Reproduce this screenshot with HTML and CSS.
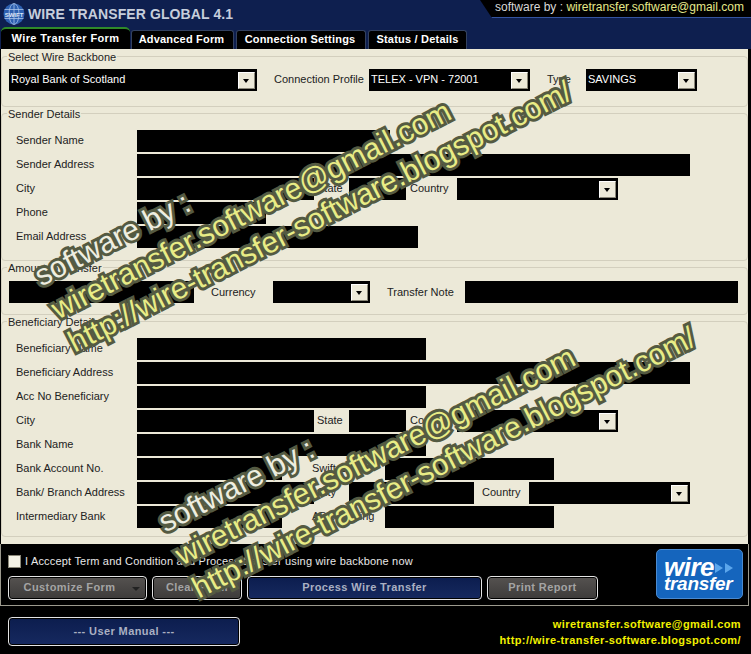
FILE: index.html
```html
<!DOCTYPE html>
<html lang="en">
<head>
    <meta charset="UTF-8">
    <title>Wire Transfer Global 4.1</title>
    <link rel="stylesheet" href="styles.css">
</head>
<body>
<div class="app">
    <header class="topbar">
        <svg class="globe" width="22" height="22" viewBox="0 0 22 22">
            <circle cx="11" cy="11" r="10.5" fill="#2c5fb0"/>
            <g fill="none" stroke="#a9c4ea" stroke-width="0.8">
                <ellipse cx="11" cy="11" rx="5" ry="10.5"/>
                <path d="M1.5 6.5h19M1.5 15.5h19M11 .5v21"/>
            </g>
            <text x="11" y="13.5" text-anchor="middle" class="globe-text">SWIFT</text>
        </svg>
        <h1 class="title">WIRE TRANSFER GLOBAL 4.1</h1>
        <div class="credit">software by : <span class="credit-mail">wiretransfer.software@gmail.com</span></div>
    </header>

    <nav class="tabs">
        <div class="tab tab-active">Wire Transfer Form</div>
        <div class="tab tab-advanced">Advanced Form</div>
        <div class="tab tab-connection">Connection Settings</div>
        <div class="tab tab-status">Status / Details</div>
    </nav>

    <form class="panel">
        <fieldset class="group group-backbone">
            <legend>Select Wire Backbone</legend>
            <div class="row indent">
                <div class="combo w-backbone">Royal Bank of Scotland<span class="arrow"></span></div>
                <label class="lbl ml-17 w-profile">Connection Profile</label>
                <div class="combo w-profile-box">TELEX - VPN - 72001<span class="arrow"></span></div>
                <label class="lbl ml-17 w-type">Type</label>
                <div class="combo w-type-box">SAVINGS<span class="arrow"></span></div>
            </div>
        </fieldset>

        <fieldset class="group group-sender">
            <legend>Sender Details</legend>
            <div class="row"><label class="lbl name">Sender Name</label><input class="field w-253"></div>
            <div class="row"><label class="lbl name">Sender Address</label><input class="field w-553"></div>
            <div class="row">
                <label class="lbl name">City</label><input class="field w-177">
                <label class="lbl w-35">State</label><input class="field w-57">
                <label class="lbl w-51">Country</label><div class="combo w-161"><span class="arrow"></span></div>
            </div>
            <div class="row"><label class="lbl name">Phone</label><input class="field w-129"></div>
            <div class="row"><label class="lbl name">Email Address</label><input class="field w-281"></div>
        </fieldset>

        <fieldset class="group group-amount">
            <legend>Amount to Transfer</legend>
            <div class="row indent">
                <input class="field w-185">
                <label class="lbl ml-17 w-62">Currency</label>
                <div class="combo w-97"><span class="arrow"></span></div>
                <label class="lbl ml-17 w-78">Transfer Note</label>
                <input class="field w-273">
            </div>
        </fieldset>

        <fieldset class="group group-beneficiary">
            <legend>Beneficiary Details</legend>
            <div class="row"><label class="lbl name">Beneficiary Name</label><input class="field w-289"></div>
            <div class="row"><label class="lbl name">Beneficiary Address</label><input class="field w-553"></div>
            <div class="row"><label class="lbl name">Acc No Beneficiary</label><input class="field w-289"></div>
            <div class="row">
                <label class="lbl name">City</label><input class="field w-177">
                <label class="lbl w-35">State</label><input class="field w-57">
                <label class="lbl w-51">Country</label><div class="combo w-161"><span class="arrow"></span></div>
            </div>
            <div class="row"><label class="lbl name">Bank Name</label><input class="field w-289"></div>
            <div class="row">
                <label class="lbl name">Bank Account No.</label><input class="field w-145">
                <label class="lbl w-103">Swift Code</label><input class="field w-169">
            </div>
            <div class="row">
                <label class="lbl name">Bank/ Branch Address</label><input class="field w-177">
                <label class="lbl w-35">City</label><input class="field w-125">
                <label class="lbl ml-8 w-47">Country</label><div class="combo w-161"><span class="arrow"></span></div>
            </div>
            <div class="row">
                <label class="lbl name">Intermediary Bank</label><input class="field w-145">
                <label class="lbl w-103">ABA Routing</label><input class="field w-169">
            </div>
        </fieldset>
    </form>

    <section class="actions">
        <div class="actions-left">
            <label class="accept"><span class="check"></span>I Acccept Term and Condition and Process transfer using wire backbone now</label>
            <div class="buttons">
                <button type="button" class="btn btn-grey btn-customize">Customize Form<span class="btn-caret"></span></button>
                <button type="button" class="btn btn-grey btn-clear">Clear Form</button>
                <button type="button" class="btn btn-navy btn-process">Process Wire Transfer</button>
                <button type="button" class="btn btn-grey btn-print">Print Report</button>
            </div>
        </div>
        <div class="logo">
            <span class="logo-wire">wire</span>
            <svg class="logo-arrows" width="18" height="10" viewBox="0 0 18 10"><path d="M0 0l8 5-8 5zM10 0l8 5-8 5z" fill="#5ba6ec"/></svg>
            <span class="logo-transfer">transfer</span>
        </div>
    </section>

    <footer class="footer">
        <button type="button" class="btn btn-navy btn-manual">--- User Manual ---</button>
        <div class="contact">
            <div>wiretransfer.software@gmail.com</div>
            <div>http://wire-transfer-software.blogspot.com/</div>
        </div>
    </footer>

    <!-- watermark stamped over the form -->
    <div class="stamp stamp-one">
        <div class="stamp-by">software by :</div>
        <div class="stamp-mail">wiretransfer.software@gmail.com</div>
        <div class="stamp-url">http://wire-transfer-software.blogspot.com/</div>
    </div>
    <div class="stamp stamp-two">
        <div class="stamp-by">software by :</div>
        <div class="stamp-mail">wiretransfer.software@gmail.com</div>
        <div class="stamp-url">http://wire-transfer-software.blogspot.com/</div>
    </div>
</div>
</body>
</html>
```

FILE: styles.css
```css
* {
    box-sizing: border-box;
}
body {
    margin: 0;
    background: #000;
    font-family: "Liberation Sans", Arial, sans-serif;
    font-size: 11px;
}
.app {
    position: relative;
    width: 751px;
    height: 654px;
    overflow: hidden;
    background: #000;
}

/* header */
.topbar {
    display: flex;
    height: 27px;
    background: #0e1f4f;
}
.globe {
    margin: 3px 0 0 3px;
}
.globe-text {
    font-size: 6px;
    font-weight: bold;
    fill: #dfe8f6;
}
.title {
    margin: 6px 0 0 3px;
    font-size: 14px;
    line-height: 16px;
    font-weight: bold;
    letter-spacing: 0.1px;
    color: #c6cedc;
    white-space: nowrap;
}
.credit {
    margin-left: auto;
    width: 271px;
    height: 18px;
    padding-left: 15px;
    background: #000;
    border-bottom: 1px solid #34539f;
    clip-path: polygon(0 0, 100% 0, 100% 100%, 12px 100%);
    color: #d8d8d8;
    font-size: 12px;
    line-height: 15px;
    white-space: nowrap;
}
.credit-mail {
    color: #e6e98a;
}

/* tabs */
.tabs {
    display: flex;
    align-items: flex-end;
    height: 22px;
    padding-left: 1px;
    background: #0e1f4f;
}
.tab {
    height: 19px;
    margin-right: 2px;
    background: #000;
    border-radius: 3px 3px 0 0;
    border: 1px solid #33415f;
    border-bottom: 0;
    color: #fff;
    font-weight: bold;
    line-height: 16px;
    text-align: center;
    letter-spacing: 0.2px;
}
.tab-active {
    width: 129px;
    height: 22px;
    margin-right: 1px;
    border: 0;
    border-top: 2px solid #2f8a2a;
    border-radius: 5px 5px 0 0;
    line-height: 18px;
    letter-spacing: 0.4px;
}
.tab-advanced { width: 103px; padding-right: 2px; }
.tab-connection { width: 130px; padding-right: 2px; }
.tab-status { width: 99px; }

/* form panel */
.panel {
    width: 747px;
    height: 495px;
    margin-left: 1px;
    padding-top: 1px;
    background: #ece9d8;
}
.group {
    margin: 0;
    min-width: 0;
    border: 1px solid #d3cfbe;
    border-radius: 4px;
    display: flex;
    flex-direction: column;
    gap: 2px;
}
.group legend {
    margin-left: 5px;
    padding: 2px 1px 0;
    line-height: 11px;
    color: #222;
}
.group-backbone { padding: 6px 0 15px 0; }
.group-sender { padding: 10px 0 12px 0; }
.group-amount { padding: 7px 0 11px 0; }
.group-amount .lbl { padding-bottom: 0; }
.group-beneficiary { padding: 10px 0 8px 0; }

.row {
    display: flex;
    align-items: center;
    height: 22px;
}
.indent {
    padding-left: 7px;
}
.lbl {
    flex: none;
    padding-bottom: 2px;
    color: #222;
    white-space: nowrap;
}
.name {
    width: 135px;
    padding-left: 14px;
}
.field {
    flex: none;
    height: 22px;
    padding: 0 3px;
    border: 0;
    background: #000;
    color: #fff;
    font: inherit;
}
.combo {
    flex: none;
    display: flex;
    align-items: center;
    justify-content: space-between;
    height: 22px;
    padding: 0 2px 2px;
    background: #000;
    color: #fff;
    white-space: nowrap;
}
.arrow {
    position: relative;
    width: 17px;
    height: 17px;
    margin: 2px 0 0 auto;
    background: #ece9d8;
    border: 1px solid;
    border-color: #fff #8a8778 #8a8778 #fff;
}
.arrow::after {
    content: "";
    position: absolute;
    left: 4px;
    top: 6px;
    border: 3.5px solid transparent;
    border-top: 4px solid #000;
    border-bottom: 0;
}

.ml-17 { margin-left: 17px; }
.ml-8 { margin-left: 8px; }
.w-backbone { width: 248px; }
.w-profile { width: 95px; }
.w-profile-box { width: 161px; }
.w-type { width: 22px; margin-right: 17px; }
.w-type-box { width: 111px; }
.w-35 { width: 35px; padding-left: 3px; }
.w-47 { width: 47px; }
.w-51 { width: 51px; padding-left: 4px; }
.w-62 { width: 62px; }
.w-78 { width: 78px; }
.w-103 { width: 103px; padding-left: 30px; }
.w-57 { width: 57px; }
.w-97 { width: 97px; }
.w-125 { width: 125px; }
.w-129 { width: 129px; }
.w-145 { width: 145px; }
.w-161 { width: 161px; }
.w-169 { width: 169px; }
.w-177 { width: 177px; }
.w-185 { width: 185px; }
.w-253 { width: 253px; }
.w-273 { width: 273px; }
.w-281 { width: 281px; }
.w-289 { width: 289px; }
.w-553 { width: 553px; }

/* bottom actions */
.actions {
    display: flex;
    justify-content: space-between;
    width: 749px;
    height: 62px;
    padding: 5px 5px 0 7px;
    border: 1px solid #9c9a8e;
    border-top: 0;
    background: #000;
}
.accept {
    display: flex;
    align-items: center;
    gap: 4px;
    height: 14px;
    margin-top: 5px;
    color: #e8e8e8;
    letter-spacing: 0.19px;
    white-space: nowrap;
}
.check {
    width: 13px;
    height: 13px;
    background: #f4f2e6;
    border: 1px solid #8a8778;
}
.buttons {
    display: flex;
    gap: 5px;
    margin-top: 8px;
}
.btn {
    position: relative;
    height: 24px;
    padding: 0 0 2px;
    border: 1px solid #e4e4e4;
    border-radius: 4px;
    box-shadow: inset 0 0 0 1px #000;
    font: inherit;
    font-weight: bold;
    letter-spacing: 0.4px;
    color: #a4a4a4;
}
.btn-grey {
    background: linear-gradient(#555250, #3d3b3a);
}
.btn-navy {
    background: linear-gradient(#0c1d4e, #16295f);
    color: #aab0c2;
}
.btn-customize {
    width: 139px;
    padding-right: 16px;
}
.btn-caret {
    position: absolute;
    right: 6px;
    top: 10px;
    border: 4px solid transparent;
    border-top: 4px solid #222;
    border-bottom: 0;
}
.btn-clear { width: 90px; }
.btn-process { width: 235px; }
.btn-print { width: 111px; }

.logo {
    position: relative;
    width: 87px;
    height: 50px;
    padding: 8px 0 0 7px;
    background: #1565bd;
    border: 1px solid #4a8ad0;
    border-radius: 5px;
    color: #fff;
    font-weight: bold;
    font-style: italic;
}
.logo-wire {
    display: block;
    font-size: 26px;
    line-height: 18px;
    letter-spacing: -0.5px;
}
.logo-transfer {
    display: block;
    font-size: 19px;
    line-height: 15px;
    letter-spacing: -0.3px;
}
.logo-arrows {
    position: absolute;
    left: 58px;
    top: 13px;
}

/* footer */
.footer {
    display: flex;
    justify-content: space-between;
    height: 48px;
    padding: 11px 10px 0 8px;
}
.btn-manual {
    width: 232px;
    height: 29px;
}
.contact {
    margin-top: -1px;
    color: #f2f000;
    font-weight: bold;
    line-height: 16px;
    text-align: right;
    letter-spacing: 0.4px;
}

/* diagonal watermark */
.stamp {
    position: absolute;
    width: 640px;
    transform: rotate(-27deg);
    transform-origin: 0 0;
    font-size: 30px;
    line-height: 37px;
    white-space: nowrap;
    -webkit-text-stroke: 6px #545a42;
}
.stamp div {
    paint-order: stroke fill;
}
.stamp-one {
    left: 28px;
    top: 261px;
}
.stamp-two {
    left: 152px;
    top: 507px;
}
.stamp-by {
    color: #eeeee0;
}
.stamp-mail,
.stamp-url {
    color: #e8ec86;
}
```
